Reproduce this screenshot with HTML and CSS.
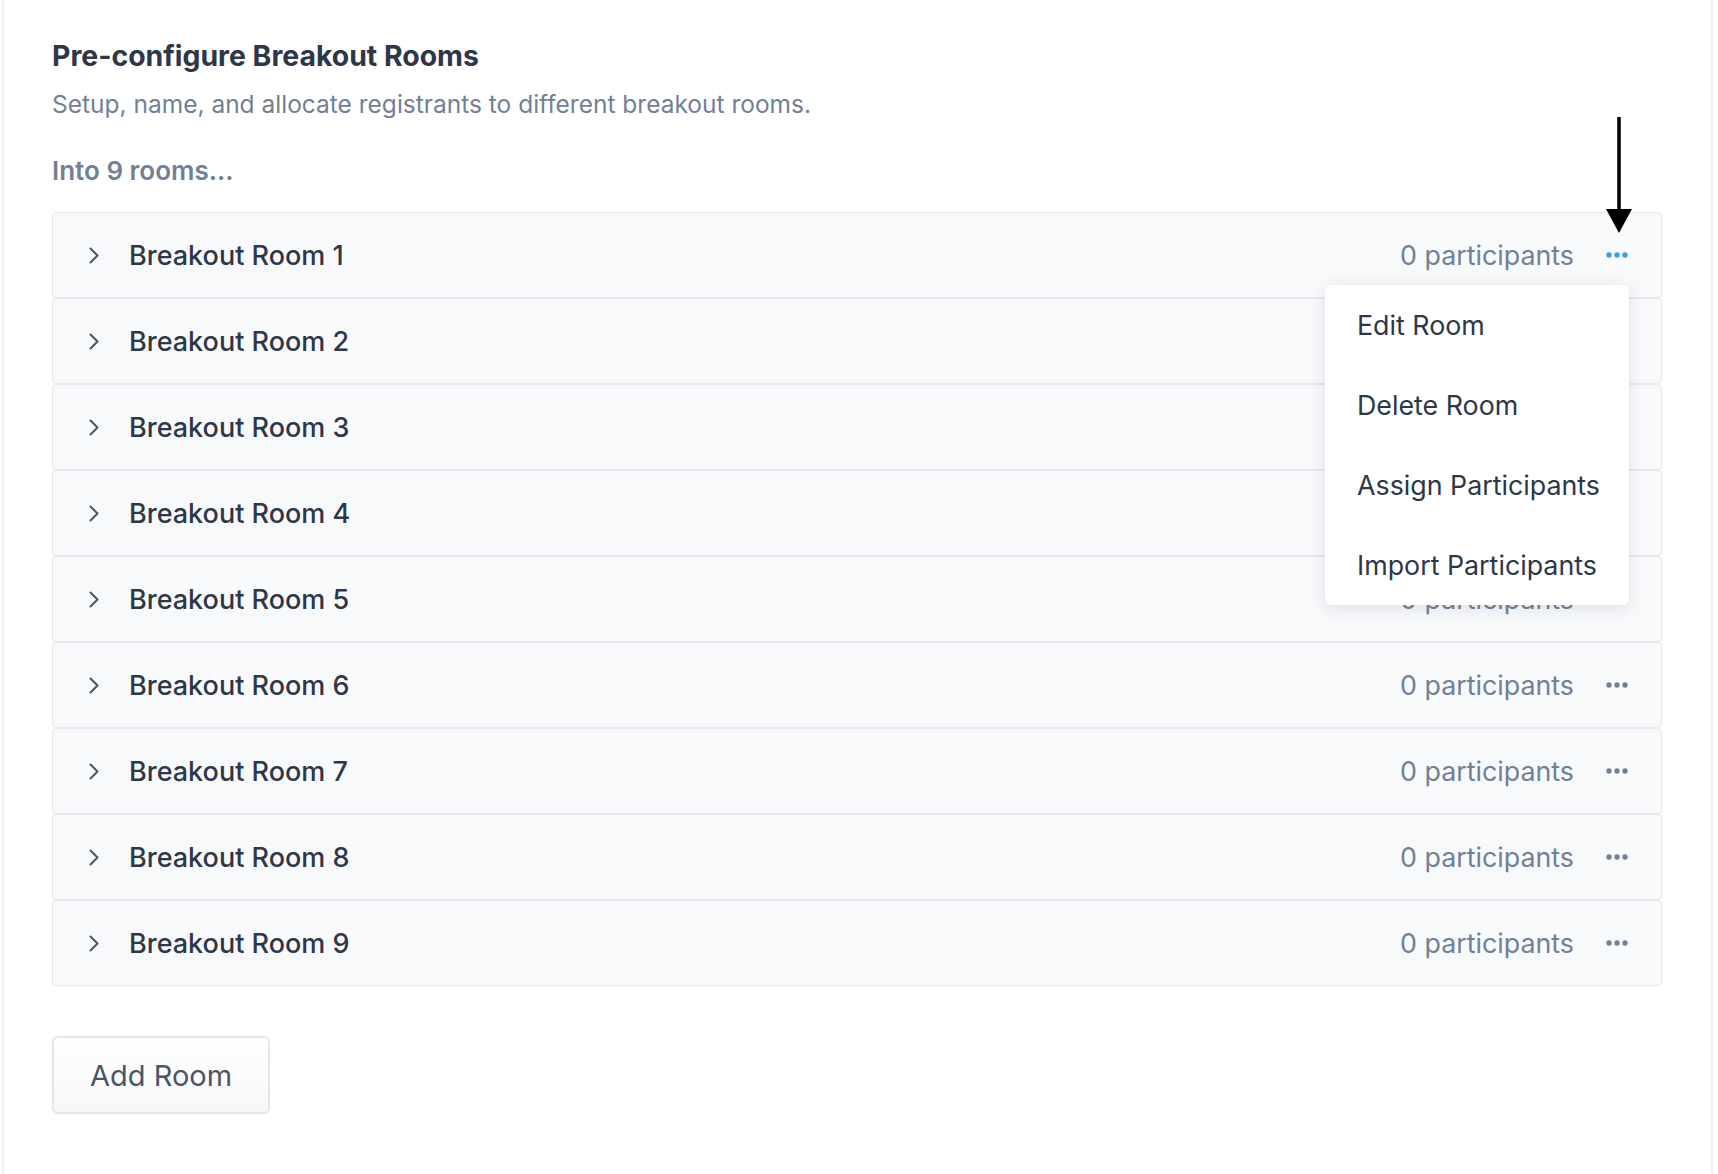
FILE: index.html
```html
<!DOCTYPE html>
<html>
<head>
    <title>Breakout Rooms</title>
<link rel="stylesheet" href="styles.css">
</head>
<body>
<div class="panel">
    <h2 class="title">Pre-configure Breakout Rooms</h2>
    <p class="subtitle">Setup, name, and allocate registrants to different breakout rooms.</p>
    <h4 class="count">Into 9 rooms...</h4>

    <ul class="rooms">
        <li class="room">
            <svg class="chevron" viewBox="0 0 10 17"><polyline points="1.5,1.5 8.5,8.5 1.5,15.5"/></svg>
            <span class="room-name">Breakout Room 1</span>
            <span class="participants">0 participants</span>
            <button class="more active"><svg viewBox="0 0 22 6"><circle cx="3" cy="3" r="2.7"/><circle cx="11" cy="3" r="2.7"/><circle cx="19" cy="3" r="2.7"/></svg></button>
            <svg class="pointer" viewBox="0 0 26 116"><line x1="13" y1="0" x2="13" y2="96"/><polygon points="0,92 26,92 13,116"/></svg>
            <ul class="menu">
                <li>Edit Room</li>
                <li>Delete Room</li>
                <li>Assign Participants</li>
                <li>Import Participants</li>
            </ul>
        </li>
        <li class="room">
            <svg class="chevron" viewBox="0 0 10 17"><polyline points="1.5,1.5 8.5,8.5 1.5,15.5"/></svg>
            <span class="room-name">Breakout Room 2</span>
            <span class="participants">0 participants</span>
            <button class="more"><svg viewBox="0 0 22 6"><circle cx="3" cy="3" r="2.7"/><circle cx="11" cy="3" r="2.7"/><circle cx="19" cy="3" r="2.7"/></svg></button>
        </li>
        <li class="room">
            <svg class="chevron" viewBox="0 0 10 17"><polyline points="1.5,1.5 8.5,8.5 1.5,15.5"/></svg>
            <span class="room-name">Breakout Room 3</span>
            <span class="participants">0 participants</span>
            <button class="more"><svg viewBox="0 0 22 6"><circle cx="3" cy="3" r="2.7"/><circle cx="11" cy="3" r="2.7"/><circle cx="19" cy="3" r="2.7"/></svg></button>
        </li>
        <li class="room">
            <svg class="chevron" viewBox="0 0 10 17"><polyline points="1.5,1.5 8.5,8.5 1.5,15.5"/></svg>
            <span class="room-name">Breakout Room 4</span>
            <span class="participants">0 participants</span>
            <button class="more"><svg viewBox="0 0 22 6"><circle cx="3" cy="3" r="2.7"/><circle cx="11" cy="3" r="2.7"/><circle cx="19" cy="3" r="2.7"/></svg></button>
        </li>
        <li class="room">
            <svg class="chevron" viewBox="0 0 10 17"><polyline points="1.5,1.5 8.5,8.5 1.5,15.5"/></svg>
            <span class="room-name">Breakout Room 5</span>
            <span class="participants">0 participants</span>
            <button class="more"><svg viewBox="0 0 22 6"><circle cx="3" cy="3" r="2.7"/><circle cx="11" cy="3" r="2.7"/><circle cx="19" cy="3" r="2.7"/></svg></button>
        </li>
        <li class="room">
            <svg class="chevron" viewBox="0 0 10 17"><polyline points="1.5,1.5 8.5,8.5 1.5,15.5"/></svg>
            <span class="room-name">Breakout Room 6</span>
            <span class="participants">0 participants</span>
            <button class="more"><svg viewBox="0 0 22 6"><circle cx="3" cy="3" r="2.7"/><circle cx="11" cy="3" r="2.7"/><circle cx="19" cy="3" r="2.7"/></svg></button>
        </li>
        <li class="room">
            <svg class="chevron" viewBox="0 0 10 17"><polyline points="1.5,1.5 8.5,8.5 1.5,15.5"/></svg>
            <span class="room-name">Breakout Room 7</span>
            <span class="participants">0 participants</span>
            <button class="more"><svg viewBox="0 0 22 6"><circle cx="3" cy="3" r="2.7"/><circle cx="11" cy="3" r="2.7"/><circle cx="19" cy="3" r="2.7"/></svg></button>
        </li>
        <li class="room">
            <svg class="chevron" viewBox="0 0 10 17"><polyline points="1.5,1.5 8.5,8.5 1.5,15.5"/></svg>
            <span class="room-name">Breakout Room 8</span>
            <span class="participants">0 participants</span>
            <button class="more"><svg viewBox="0 0 22 6"><circle cx="3" cy="3" r="2.7"/><circle cx="11" cy="3" r="2.7"/><circle cx="19" cy="3" r="2.7"/></svg></button>
        </li>
        <li class="room">
            <svg class="chevron" viewBox="0 0 10 17"><polyline points="1.5,1.5 8.5,8.5 1.5,15.5"/></svg>
            <span class="room-name">Breakout Room 9</span>
            <span class="participants">0 participants</span>
            <button class="more"><svg viewBox="0 0 22 6"><circle cx="3" cy="3" r="2.7"/><circle cx="11" cy="3" r="2.7"/><circle cx="19" cy="3" r="2.7"/></svg></button>
        </li>
    </ul>

    <button class="add-room">Add Room</button>
</div>
</body>
</html>
```

FILE: styles.css
```css
body {
  margin: 0;
  background-color: white;
  font-family: Inter, "Noto Sans", sans-serif;
}
.panel {
  margin: 0 5px 0 2px;
  min-height: 100vh;
  box-sizing: border-box;
  padding: 38px 49px 40px 48px;
  border-left: 2px solid #eef0f3;
  border-right: 2px solid #eef0f3;
}
.title {
  margin: 0;
  font-size: 28.4px;
  line-height: 36px;
  font-weight: 700;
  color: #2d3748;
}
.subtitle {
  margin: 15px 0 0;
  font-size: 24.5px;
  line-height: 30px;
  color: #718096;
}
.count {
  margin: 36px 0 0;
  font-size: 26px;
  line-height: 32px;
  font-weight: 600;
  color: #718096;
}

/* room list */
.rooms {
  list-style: none;
  margin: 25px 0 0;
  padding: 0;
}
.room {
  position: relative;
  display: flex;
  align-items: center;
  height: 86px;
  box-sizing: border-box;
  padding: 0 33px 0 36px;
  background-color: #f8f9fb;
  border: 1px solid #e6e8ed;
  border-radius: 4px;
}
.chevron {
  width: 10px;
  height: 17px;
  margin-right: 30px;
  fill: none;
  stroke: #4a5568;
  stroke-width: 2;
  stroke-linecap: round;
  stroke-linejoin: round;
}
.room-name {
  flex: 1;
  font-size: 27px;
  font-weight: 500;
  color: #2d3748;
}
.participants {
  font-size: 26.8px;
  color: #718096;
}
.more {
  margin-left: 32px;
  padding: 0;
  border: none;
  background: none;
  display: flex;
}
.more svg {
  width: 22px;
  height: 6px;
  fill: #718096;
}
.more.active svg {
  fill: #4299e1;
}

/* annotation arrow above the first menu button */
.pointer {
  position: absolute;
  top: -96px;
  right: 29px;
  width: 26px;
  height: 116px;
}
.pointer line {
  stroke: black;
  stroke-width: 3.5;
}
.pointer polygon {
  fill: black;
}

/* dropdown of the first room */
.menu {
  position: absolute;
  top: 72px;
  right: 32px;
  width: 304px;
  z-index: 2;
  list-style: none;
  margin: 0;
  padding: 0;
  background-color: white;
  border-radius: 6px;
  box-shadow: 0 3px 16px rgba(45, 55, 72, 0.13);
}
.menu li {
  height: 80px;
  line-height: 80px;
  padding-left: 32px;
  font-size: 26.8px;
  color: #2d3748;
}

.add-room {
  margin-top: 50px;
  height: 78px;
  padding: 0 36px;
  font-family: inherit;
  font-size: 29px;
  color: #4a5568;
  background: linear-gradient(#ffffff, #f6f7f9);
  border: 2px solid #e2e5ea;
  border-radius: 6px;
}
```
